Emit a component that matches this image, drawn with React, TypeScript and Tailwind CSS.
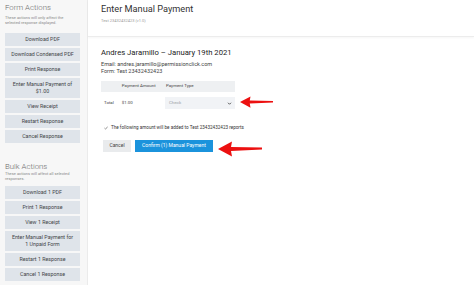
import * as React from "react";

const formActions = [
  "Download PDF",
  "Download Condensed PDF",
  "Print Response",
  "Enter Manual Payment of\n$1.00",
  "View Receipt",
  "Restart Response",
  "Cancel Response",
];

const bulkActions = [
  "Download 1 PDF",
  "Print 1 Response",
  "View 1 Receipt",
  "Enter Manual Payment for\n1 Unpaid Form",
  "Restart 1 Response",
  "Cancel 1 Response",
];

function ActionButton({ label }: { label: string }) {
  return (
    <button className="w-full min-h-[13px] bg-[#dfe4ea] text-[#3f4448] text-[5.3px] leading-[7px] px-[2px] py-[3px] text-center whitespace-pre-line">
      {label}
    </button>
  );
}

function RedArrow({ className }: { className: string }) {
  return (
    <svg className={className} viewBox="0 0 44 16">
      <path d="M0 8 L14 0.5 L13 6 L44 6.6 L44 8.6 L13 10 L14 15.5 Z" fill="#ec1010" />
    </svg>
  );
}

export default function App() {
  return (
    <div className="relative w-[474px] h-[285px] flex bg-white overflow-hidden font-['Roboto',sans-serif]">
      {/* Sidebar */}
      <aside className="w-[88px] shrink-0 bg-[#f7f7f7] border-r border-[#ebebeb] pl-[5px] pr-[7px] pt-[3px]">
        <h3 className="text-[7.8px] leading-[10px] font-light text-[#6b6b6b]">Form Actions</h3>
        <p className="text-[4px] leading-[5px] text-[#8a8a8a] mt-[2px] pr-[8px]">
          These actions will only affect the selected response displayed.
        </p>
        <div className="flex flex-col gap-[2px] mt-[8px]">
          {formActions.map((a) => (
            <ActionButton key={a} label={a} />
          ))}
        </div>

        <h3 className="text-[7.8px] leading-[8px] font-light text-[#6b6b6b] mt-[20px]">Bulk Actions</h3>
        <p className="text-[4px] leading-[5px] text-[#8a8a8a] mt-0 pr-[10px]">
          These actions will affect all selected responses.
        </p>
        <div className="flex flex-col gap-[2px] mt-[5px]">
          {bulkActions.map((a) => (
            <ActionButton key={a} label={a} />
          ))}
        </div>
      </aside>

      {/* Main */}
      <main className="flex-1 flex flex-col">
        <header className="pl-[13px] pt-[3px] h-[37px] border-b border-[#ececec] shadow-[0_1px_2px_rgba(0,0,0,0.04)]">
          <h1 className="text-[9.2px] leading-[12px] text-[#333]">Enter Manual Payment</h1>
          <p className="text-[4px] leading-[6px] text-[#9a9a9a] mt-[3px]">Test 23432432423 (v1.0)</p>
        </header>

        <section className="pl-[13px] pt-[11px]">
          <h2 className="text-[7.7px] leading-[10px] text-[#222]">Andres Jaramillo – January 19th 2021</h2>
          <p className="text-[5.5px] leading-[6.5px] text-[#444] mt-[3px]">Email: andres.jaramillo@permissionclick.com</p>
          <p className="text-[5.5px] leading-[6.5px] text-[#444]">Form: Test 23432432423</p>

          <table className="mt-[7px] w-[134px] text-[4.4px] text-[#444] border-collapse">
            <thead>
              <tr className="bg-[#eef0f2] h-[11px]">
                <th className="w-[20px]" />
                <th className="w-[45px] text-left font-normal pl-[1px]">Payment Amount</th>
                <th className="text-left font-normal pl-[1px]">Payment Type</th>
              </tr>
            </thead>
            <tbody>
              <tr className="h-[22px]">
                <td className="pl-[3px]">Total</td>
                <td className="pl-[1px]">$1.00</td>
                <td>
                  <div className="w-[70px] h-[12px] bg-[#f1f3f6] flex items-center justify-between pl-[4px] pr-[3px] text-[#a0a4a8]">
                    <span>Check</span>
                    <svg viewBox="0 0 10 10" className="w-[5px] h-[5px]">
                      <path d="M2 3.5 L5 6.5 L8 3.5" stroke="#333" strokeWidth="1.6" fill="none" />
                    </svg>
                  </div>
                </td>
              </tr>
            </tbody>
          </table>

          <div className="flex items-center gap-[3px] mt-[11px] pl-[3px]">
            <svg viewBox="0 0 10 10" className="w-[4px] h-[4px]">
              <path d="M1 5 L4 8 L9 1.5" stroke="#666" strokeWidth="1.6" fill="none" />
            </svg>
            <span className="text-[4.6px] text-[#333]">The following amount will be added to Test 23432432423 reports</span>
          </div>

          <div className="flex gap-[4px] mt-[8px] pl-[2px]">
            <button className="w-[28px] h-[12px] bg-[#e9ebed] text-[5px] text-[#444]">Cancel</button>
            <button className="w-[78px] h-[12px] bg-[#1b93dc] text-[5px] text-white">Confirm (1) Manual Payment</button>
          </div>
        </section>
      </main>

      {/* annotation arrows */}
      <RedArrow className="absolute left-[240px] top-[94px] w-[33px] h-[16px]" />
      <RedArrow className="absolute left-[218px] top-[141px] w-[44px] h-[16px]" />
    </div>
  );
}
